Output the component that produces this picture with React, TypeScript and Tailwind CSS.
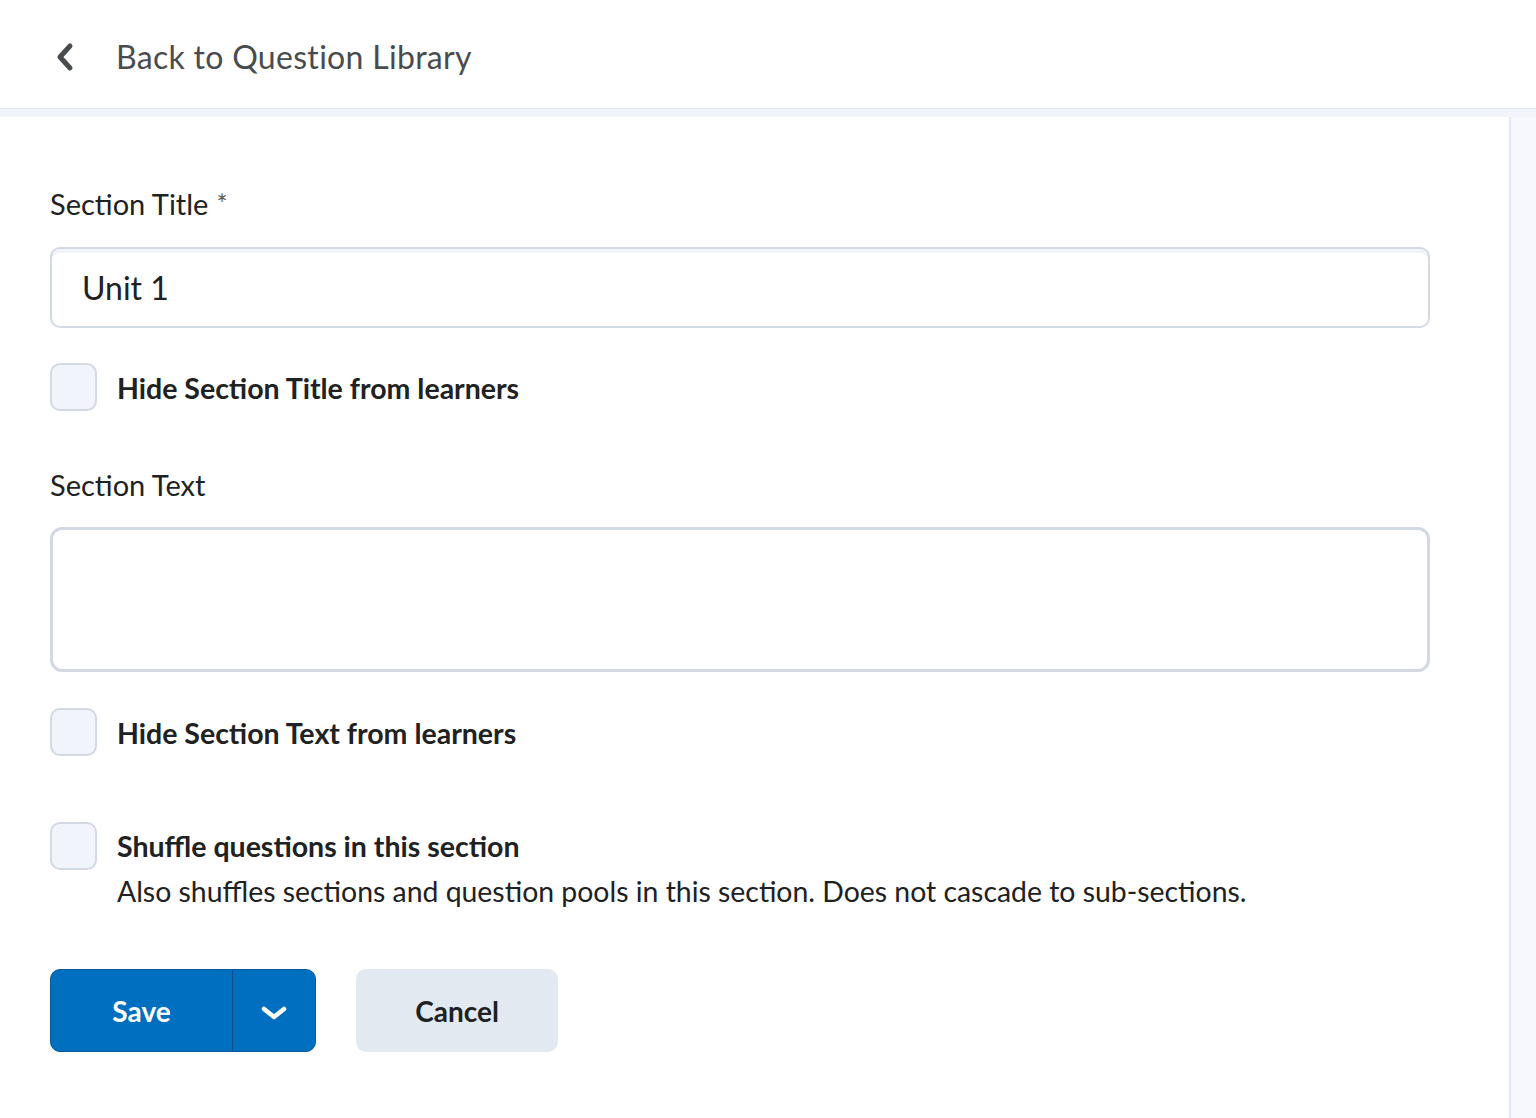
import { useState } from 'react';

function Checkbox() {
    return (
        <div className="w-[47px] h-[48px] shrink-0 rounded-[10px] border-2 border-[#d3d9e3] bg-[#f1f5fb]" />
    );
}

export default function App() {
    const [title, setTitle] = useState('Unit 1');

    return (
        <div className="min-h-[1118px] flex flex-col bg-white text-[#202122] font-['Lato',_'Liberation_Sans',_sans-serif]">
            {/* Header */}
            <div className="h-[109px] shrink-0 flex items-center pt-[5px] border-b border-[#e3e9f1]">
                <button className="flex items-center pl-[55px] text-[#494c4e]">
                    <svg width="22" height="30" viewBox="0 0 22 30" className="mr-[39px]">
                        <polyline
                            points="15,4 5,15 15,26"
                            fill="none"
                            stroke="#494c4e"
                            strokeWidth="5"
                            strokeLinecap="round"
                            strokeLinejoin="round"
                        />
                    </svg>
                    <span className="text-[32px] tracking-[0.3px] leading-none">Back to Question Library</span>
                </button>
            </div>
            <div className="h-[8px] shrink-0 bg-[#f1f5fb]" />

            {/* Content */}
            <div className="flex-1 flex">
                <div className="flex-1 border-r-2 border-[#e3e9f1] pl-[50px] pr-[79px] pt-[69px] pb-[60px]">
                    <label className="block text-[29px] leading-[36px] text-[#202122]">
                        Section Title<span className="ml-[8px] text-[26px] leading-[36px] align-top text-[#565a5c]">*</span>
                    </label>
                    <div className="mt-[25px] h-[81px] rounded-[10px] border-2 border-[#d3d9e3] shadow-[inset_0_4px_0_0_#f1f5fb] flex items-center px-[30px]">
                        <input
                            value={title}
                            onChange={(e) => setTitle(e.target.value)}
                            className="w-full bg-transparent outline-none text-[32px] text-[#202122]"
                        />
                    </div>

                    <div className="mt-[35px] flex items-center gap-[20px]">
                        <Checkbox />
                        <span className="pt-[2px] text-[28.5px] font-bold leading-[36px]">Hide Section Title from learners</span>
                    </div>

                    <label className="block mt-[56px] text-[29px] leading-[36px]">Section Text</label>
                    <div className="mt-[24px] h-[145px] rounded-[12px] border-[3px] border-[#d3d9e3] bg-white" />

                    <div className="mt-[36px] flex items-center gap-[20px]">
                        <Checkbox />
                        <span className="pt-[2px] text-[28.5px] font-bold leading-[36px]">Hide Section Text from learners</span>
                    </div>

                    <div className="mt-[66px] flex items-start gap-[20px]">
                        <Checkbox />
                        <div className="flex flex-col">
                            <span className="text-[28.5px] font-bold leading-[48px]">Shuffle questions in this section</span>
                            <span className="mt-[3px] text-[28.4px] leading-[36px]">
                                Also shuffles sections and question pools in this section. Does not cascade to sub-sections.
                            </span>
                        </div>
                    </div>

                    <div className="mt-[60px] flex items-center gap-[40px]">
                        <div className="flex h-[83px] rounded-[10px] bg-[#006fbf] border border-[#0a5a9c] overflow-hidden">
                            <button className="w-[181px] text-white text-[28px] font-bold">Save</button>
                            <div className="w-[1px] bg-[#0a4f8a]" />
                            <button className="w-[82px] flex items-center justify-center pt-[4px]">
                                <svg width="28" height="18" viewBox="0 0 28 18">
                                    <polyline
                                        points="4,5 14,13 24,5"
                                        fill="none"
                                        stroke="white"
                                        strokeWidth="4.5"
                                        strokeLinecap="round"
                                        strokeLinejoin="round"
                                    />
                                </svg>
                            </button>
                        </div>
                        <button className="w-[202px] h-[83px] rounded-[10px] bg-[#e3e9f1] text-[28px] font-bold text-[#202122]">
                            Cancel
                        </button>
                    </div>
                </div>
                <div className="w-[25px] shrink-0 bg-[#f6f8fd]" />
            </div>
        </div>
    );
}
